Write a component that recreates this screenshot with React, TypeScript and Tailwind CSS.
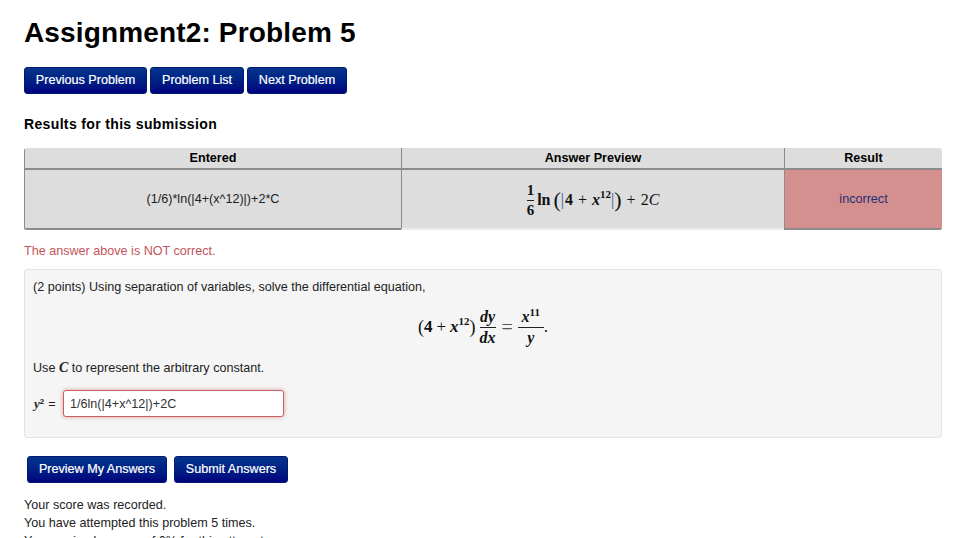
const FONT = "font-['Liberation_Sans',Arial,sans-serif]";

function NavButton({ label, className }: { label: string; className: string }) {
  return (
    <button
      type="button"
      className={`h-[27px] rounded-[3px] border border-[#001a70] bg-gradient-to-b from-[#08348c] to-[#00007e] pb-[1px] text-center text-[12.6px] [-webkit-text-stroke:0.2px_white] text-white ${className}`}
    >
      {label}
    </button>
  );
}

function Sup({ children }: { children: string }) {
  return <sup className="relative top-[-6px] align-baseline text-[11px] font-bold leading-none">{children}</sup>;
}

function Frac({ top, bottom, className }: { top: React.ReactNode; bottom: React.ReactNode; className: string }) {
  return (
    <span className={`inline-flex flex-col items-center align-middle leading-none ${className}`}>
      <span className="pb-[2px]">{top}</span>
      <span className="h-px self-stretch bg-[#222]" />
      <span className="pt-[2px]">{bottom}</span>
    </span>
  );
}

export default function App() {
  return (
    <div className={`h-[538px] w-[956px] overflow-hidden bg-white px-6 text-[12.6px] leading-[18px] text-[#222] ${FONT}`}>
      <h1 className="pt-[16px] text-[28px] font-bold leading-[34px] tracking-[0.15px] text-black">
        Assignment2: Problem 5
      </h1>

      <nav className="mt-[17px] flex gap-[3px]">
        <NavButton label="Previous Problem" className="w-[123px]" />
        <NavButton label="Problem List" className="w-[94px]" />
        <NavButton label="Next Problem" className="w-[100px]" />
      </nav>

      <h2 className="mt-[20px] text-[14px] font-bold leading-[20px] tracking-[0.35px] text-black">
        Results for this submission
      </h2>

      <table className="mt-[14px] w-[918px] table-fixed border-separate border-spacing-0 overflow-hidden rounded-[3px] bg-[#ddd] text-[12.6px]">
        <thead>
          <tr className="h-[22px] font-bold text-black">
            <th className="w-[377px] border-b-2 border-l border-[#8c8c8c] font-bold">Entered</th>
            <th className="w-[383px] border-b-2 border-l border-[#8c8c8c] font-bold">Answer Preview</th>
            <th className="border-b-2 border-l border-[#8c8c8c] font-bold">Result</th>
          </tr>
        </thead>
        <tbody>
          <tr className="h-[60px]">
            <td className="border-b-2 border-l border-[#8c8c8c] text-center">(1/6)*ln(|4+(x^12)|)+2*C</td>
            <td className="border-b-2 border-l border-b-[#ececec] border-l-[#8c8c8c] text-center font-['Liberation_Serif',serif] text-[16px] text-[#111]">
              <span className="inline-flex items-center justify-center">
                <Frac top={<b>1</b>} bottom={<b>6</b>} className="text-[15px]" />
                <span className="ml-[3px] mr-[3px] font-bold">ln</span>
                <span className="text-[22px] font-light leading-none">(</span>
                <span className="text-[#2a5a99]">|</span>
                <b className="ml-[1px]">4</b>
                <span className="mx-[5px]">+</span>
                <i className="font-bold">x</i>
                <Sup>12</Sup>
                <span className="text-[#2a5a99]">|</span>
                <span className="text-[22px] font-light leading-none">)</span>
                <span className="mx-[5px]">+</span>
                <span>2</span>
                <i>C</i>
              </span>
            </td>
            <td className="border-b-2 border-l border-[#8c8c8c] bg-[#d48f8f] text-center text-[#1c2f74]">incorrect</td>
          </tr>
        </tbody>
      </table>

      <p className="mt-[12px] leading-[18px] text-[#c2545c]">The answer above is NOT correct.</p>

      <section className="mt-[9px] h-[169px] w-[918px] rounded-[3px] border border-[#e3e3e3] bg-[#f5f5f5] px-2 pt-[8px]">
        <p className="leading-[18px]">(2 points) Using separation of variables, solve the differential equation,</p>

        <div className="mt-[9px] flex h-[44px] items-center justify-center font-['Liberation_Serif',serif] text-[17px] text-[#111]">
          <span className="text-[18px]">(</span>
          <b>4</b>
          <span className="mx-[4px]">+</span>
          <i className="font-bold">x</i>
          <Sup>12</Sup>
          <span className="text-[18px]">)</span>
          <Frac top={<i className="font-bold">dy</i>} bottom={<i className="font-bold">dx</i>} className="ml-[4px] text-[16px]" />
          <span className="ml-[6px] mr-[5px] text-[20px] font-light leading-none text-[#555]">=</span>
          <Frac
            top={
              <span>
                <i className="font-bold">x</i>
                <Sup>11</Sup>
              </span>
            }
            bottom={<i className="font-bold">y</i>}
            className="w-[26px] text-[16px]"
          />
          <span>.</span>
        </div>

        <p className="mt-[10px] leading-[18px]">
          Use <i className="font-['Liberation_Serif',serif] text-[14px] font-bold">C</i> to represent the arbitrary constant.
        </p>

        <div className="mt-[13px] flex items-center">
          <span className="w-[30px] pl-[1px]">
            <i className="font-['Liberation_Serif',serif] text-[13px] font-bold">y</i>
            <sup className="relative top-[-4px] align-baseline text-[8px] font-bold leading-none">2</sup>
            <span className="ml-[4px]">=</span>
          </span>
          <input
            readOnly
            value="1/6ln(|4+x^12|)+2C"
            className="h-[27px] w-[221px] rounded-[3px] border border-[#c9605f] bg-white px-[6px] text-[12.6px] text-[#333] shadow-[0_0_4px_rgba(185,74,72,0.5)] outline-none"
          />
        </div>
      </section>

      <div className="ml-[3px] mt-[18px] flex gap-[7px]">
        <NavButton label="Preview My Answers" className="w-[140px]" />
        <NavButton label="Submit Answers" className="w-[114px]" />
      </div>

      <div className="mt-[13px] leading-[18px]">
        <p>Your score was recorded.</p>
        <p>You have attempted this problem 5 times.</p>
        <p>You received a score of 0% for this attempt.</p>
      </div>
    </div>
  );
}
